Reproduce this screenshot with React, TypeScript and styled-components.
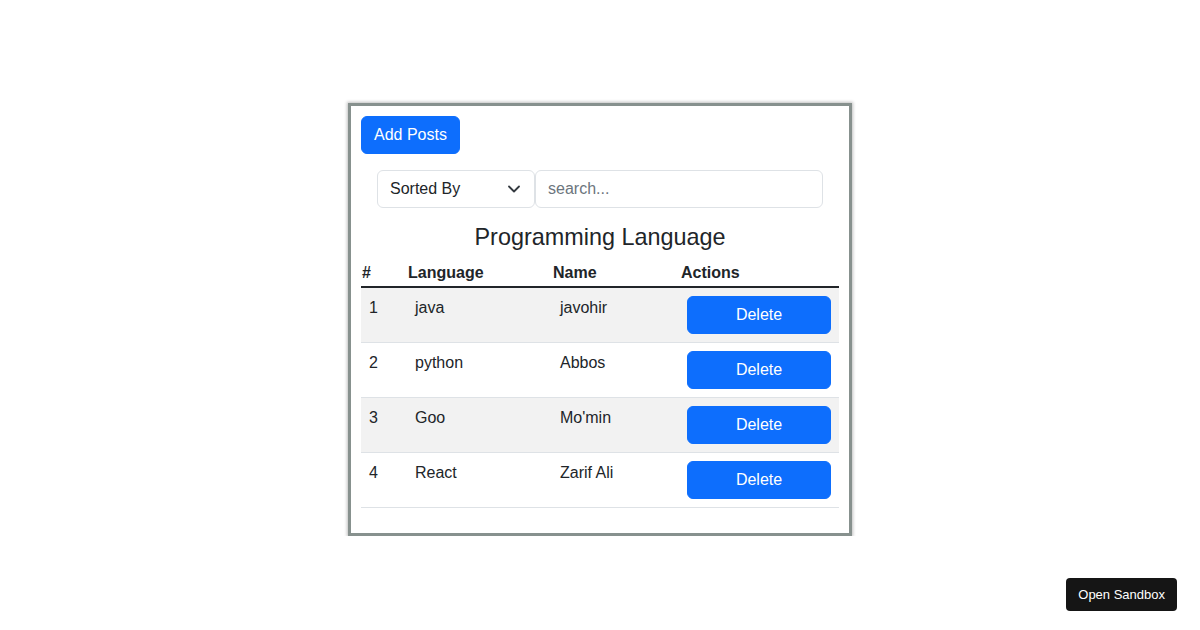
import React, { useState } from "react";
import styled, { createGlobalStyle } from "styled-components";

const GlobalStyle = createGlobalStyle`
  * { box-sizing: border-box; }
  body {
    margin: 0;
    background: #ffffff;
    color: #212529;
    font-family: "Liberation Sans", Arial, sans-serif;
    font-size: 16px;
    line-height: 1.5;
  }
`;

const Page = styled.div`
  display: flex;
  justify-content: center;
  padding-top: 103px;
`;

const Card = styled.div`
  width: 504px;
  border: 3px solid #87918e;
  box-shadow: 0 0 3px 1px rgba(0, 0, 0, 0.25);
  padding: 10px 10px 25px;
  background: #fff;
`;

const PrimaryButton = styled.button<{ $block?: boolean }>`
  display: inline-block;
  width: ${(p) => (p.$block ? "100%" : "auto")};
  height: 38px;
  padding: 6px 12px;
  font-family: inherit;
  font-size: 16px;
  line-height: 24px;
  color: #fff;
  background: #0d6efd;
  border: 1px solid #0d6efd;
  border-radius: 6px;
  cursor: pointer;
`;

const FilterRow = styled.div`
  display: flex;
  margin: 16px 16px 0;
`;

const SelectBox = styled.div`
  position: relative;
  width: 158px;
  height: 38px;
  border: 1px solid #dee2e6;
  border-radius: 6px;
  padding: 6px 36px 6px 12px;
  font-size: 16px;
  line-height: 24px;
  color: #212529;
  display: flex;
  align-items: center;
`;

const Chevron = styled.svg`
  position: absolute;
  right: 13px;
  top: 50%;
  transform: translateY(-50%);
`;

const SearchInput = styled.input`
  flex: 1;
  height: 38px;
  border: 1px solid #dee2e6;
  border-radius: 6px;
  padding: 6px 12px;
  font-family: inherit;
  font-size: 16px;
  line-height: 24px;
  color: #212529;
  outline: none;
  &::placeholder {
    color: #6c757d;
  }
`;

const Title = styled.h3`
  margin: 15px 0 0;
  font-size: 23.4px;
  font-weight: 400;
  line-height: 28px;
  text-align: center;
`;

const Table = styled.div`
  margin-top: 9px;
`;

const cols = "46px 145px 128px 1fr";

const HeadRow = styled.div`
  display: grid;
  grid-template-columns: ${cols};
  border-bottom: 2px solid #212529;
`;

const HeadCell = styled.div`
  padding: 1px;
  font-weight: 700;
  line-height: 24px;
`;

const Row = styled.div<{ $striped: boolean }>`
  display: grid;
  grid-template-columns: ${cols};
  align-items: start;
  background: ${(p) => (p.$striped ? "#f2f2f2" : "#ffffff")};
  border-bottom: 1px solid #dee2e6;
`;

const Cell = styled.div`
  padding: 8px;
  line-height: 24px;
`;

const ActionCell = styled.div`
  padding: 8px 8px 8px 7px;
`;

const SandboxButton = styled.button`
  position: fixed;
  right: 23px;
  bottom: 19px;
  height: 33px;
  padding: 0 12px;
  background: #151515;
  color: #ffffff;
  border: none;
  border-radius: 4px;
  font-family: "Liberation Sans", Arial, sans-serif;
  font-size: 13px;
  cursor: pointer;
`;

const initialData = [
  { id: 1, language: "java", name: "javohir" },
  { id: 2, language: "python", name: "Abbos" },
  { id: 3, language: "Goo", name: "Mo'min" },
  { id: 4, language: "React", name: "Zarif Ali" },
];

export default function App() {
  const [rows, setRows] = useState(initialData);
  return (
    <>
      <GlobalStyle />
      <Page>
        <Card>
          <PrimaryButton>Add Posts</PrimaryButton>
          <FilterRow>
            <SelectBox>
              Sorted By
              <Chevron width="14" height="10" viewBox="0 0 14 10">
                <path
                  d="M2 2.5l5 5 5-5"
                  fill="none"
                  stroke="#343a40"
                  strokeWidth="1.8"
                  strokeLinecap="round"
                  strokeLinejoin="round"
                />
              </Chevron>
            </SelectBox>
            <SearchInput placeholder="search..." />
          </FilterRow>
          <Title>Programming Language</Title>
          <Table>
            <HeadRow>
              <HeadCell>#</HeadCell>
              <HeadCell>Language</HeadCell>
              <HeadCell>Name</HeadCell>
              <HeadCell>Actions</HeadCell>
            </HeadRow>
            {rows.map((r, i) => (
              <Row key={r.id} $striped={i % 2 === 0}>
                <Cell>{r.id}</Cell>
                <Cell>{r.language}</Cell>
                <Cell>{r.name}</Cell>
                <ActionCell>
                  <PrimaryButton
                    $block
                    onClick={() => setRows(rows.filter((x) => x.id !== r.id))}
                  >
                    Delete
                  </PrimaryButton>
                </ActionCell>
              </Row>
            ))}
          </Table>
        </Card>
      </Page>
      <SandboxButton>Open Sandbox</SandboxButton>
    </>
  );
}
